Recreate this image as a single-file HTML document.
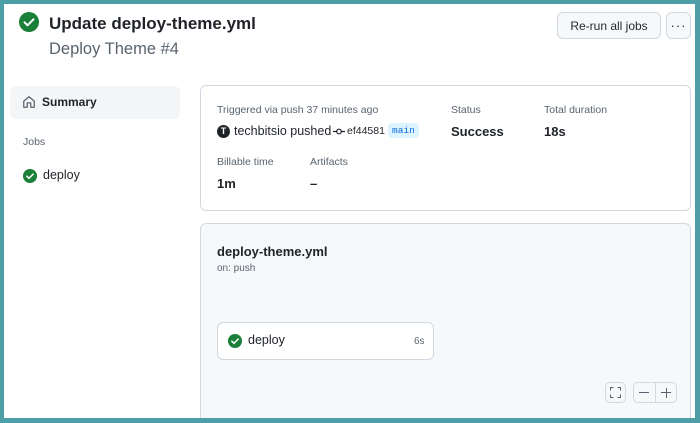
<!DOCTYPE html>
<html><head><style>
*{box-sizing:border-box;margin:0;padding:0}
body{width:700px;height:423px;background:#4d9ea6;font-family:"Liberation Sans",sans-serif;color:#1f2328;overflow:hidden;position:relative}
.page{position:absolute;left:4px;top:4px;width:691px;height:414px;background:#fff;overflow:hidden}
.abs{position:absolute}
.btn{position:absolute;border:1px solid #d1d9e0;background:#f6f8fa;border-radius:6px;font-size:12px;display:flex;align-items:center;justify-content:center;color:#25292e}
.lbl{font-size:10.5px;color:#59636e;position:absolute}
.val{font-size:13px;font-weight:bold;position:absolute}
</style></head><body>
<div class="page">
<svg class="abs" style="left:15px;top:8px" width="20" height="20" viewBox="0 0 20 20"><circle cx="10" cy="10" r="10" fill="#1a7f37"/><path d="M5.5 10.3l3 3 6-6" stroke="#fff" stroke-width="2" fill="none" stroke-linecap="round" stroke-linejoin="round"/></svg>
<div class="abs" style="left:45px;top:10px;font-size:17px;font-weight:bold">Update deploy-theme.yml</div>
<div class="abs" style="left:45px;top:36px;font-size:16.5px;color:#59636e">Deploy Theme #4</div>
<div class="btn" style="left:553px;top:8px;width:104px;height:27px">Re-run all jobs</div>
<div class="btn" style="left:662px;top:8px;width:25px;height:27px;font-size:13px;letter-spacing:1px">···</div>

<div class="abs" style="left:6px;top:82px;width:170px;height:33px;background:#f3f5f7;border-radius:6px"></div>
<svg class="abs" style="left:18px;top:91px" width="14" height="14" viewBox="0 0 16 16"><path d="M2 7l6-5 6 5v7H10V9H6v5H2z" fill="none" stroke="#59636e" stroke-width="1.4" stroke-linejoin="round"/></svg>
<div class="abs" style="left:38px;top:91px;font-size:12px;font-weight:bold">Summary</div>
<div class="abs" style="left:19px;top:132px;font-size:10.5px;color:#59636e">Jobs</div>
<svg class="abs" style="left:19px;top:165px" width="14" height="14" viewBox="0 0 20 20"><circle cx="10" cy="10" r="10" fill="#1a7f37"/><path d="M5.5 10.3l3 3 6-6" stroke="#fff" stroke-width="2.2" fill="none" stroke-linecap="round"/></svg>
<div class="abs" style="left:39px;top:164px;font-size:12.5px">deploy</div>

<div class="abs" style="left:196px;top:81px;width:491px;height:126px;border:1px solid #d1d9e0;border-radius:6px"></div>
<div class="lbl" style="left:213px;top:100px">Triggered via push 37 minutes ago</div>
<div class="abs" style="left:213px;top:121px;width:13px;height:13px;border-radius:50%;background:#1f2328;color:#fff;font-size:9px;font-weight:bold;text-align:center;line-height:13px">T</div>
<div class="abs" style="left:230px;top:120px;font-size:12.5px">techbitsio pushed</div>
<svg class="abs" style="left:329px;top:123px" width="12" height="9" viewBox="0 0 12 9"><path d="M0 4.5h3.5M8.5 4.5H12" stroke="#1f2328" stroke-width="1.2"/><circle cx="6" cy="4.5" r="2.3" fill="none" stroke="#1f2328" stroke-width="1.2"/></svg>
<div class="abs" style="left:343px;top:121px;font-size:10.5px">ef44581</div>
<div class="abs" style="left:384px;top:119px;font-size:9.5px;font-family:'Liberation Mono',monospace;color:#0969da;background:#ddf4ff;padding:2px 4px;border-radius:4px">main</div>
<div class="lbl" style="left:447px;top:100px">Status</div>
<div class="val" style="left:447px;top:120px">Success</div>
<div class="lbl" style="left:540px;top:100px">Total duration</div>
<div class="val" style="left:540px;top:120px">18s</div>
<div class="lbl" style="left:213px;top:152px">Billable time</div>
<div class="val" style="left:213px;top:172px">1m</div>
<div class="lbl" style="left:306px;top:152px">Artifacts</div>
<div class="val" style="left:306px;top:172px">–</div>

<div class="abs" style="left:196px;top:219px;width:491px;height:210px;border:1px solid #d1d9e0;border-radius:6px;background:#f6f8fa"></div>
<div class="abs" style="left:213px;top:240px;font-size:13px;font-weight:bold">deploy-theme.yml</div>
<div class="abs" style="left:213px;top:259px;font-size:10px;color:#59636e">on: push</div>
<div class="abs" style="left:213px;top:318px;width:217px;height:38px;border:1px solid #d1d9e0;border-radius:6px;background:#fff"></div>
<svg class="abs" style="left:224px;top:330px" width="14" height="14" viewBox="0 0 20 20"><circle cx="10" cy="10" r="10" fill="#1a7f37"/><path d="M5.5 10.3l3 3 6-6" stroke="#fff" stroke-width="2.2" fill="none" stroke-linecap="round"/></svg>
<div class="abs" style="left:244px;top:329px;font-size:12.5px">deploy</div>
<div class="abs" style="left:410px;top:332px;font-size:10px;color:#59636e">6s</div>
<div class="abs" style="left:601px;top:378px;width:21px;height:21px;border:1px solid #d1d9e0;border-radius:5px;background:#f6f8fa"></div>
<svg class="abs" style="left:606px;top:383px" width="11" height="11" viewBox="0 0 11 11"><path d="M0.5 3.5v-3h3M7.5 0.5h3v3M10.5 7.5v3h-3M3.5 10.5h-3v-3" stroke="#59636e" stroke-width="1.1" fill="none"/></svg>
<div class="abs" style="left:629px;top:378px;width:44px;height:21px;border:1px solid #d1d9e0;border-radius:5px;background:#f6f8fa"></div>
<div class="abs" style="left:651px;top:379px;width:1px;height:19px;background:#d1d9e0"></div>
<div class="abs" style="left:635px;top:388px;width:10px;height:1.2px;background:#59636e"></div>
<div class="abs" style="left:657px;top:388px;width:10px;height:1.2px;background:#59636e"></div>
<div class="abs" style="left:661.5px;top:383.5px;width:1.2px;height:10px;background:#59636e"></div>
</div>
</body></html>
